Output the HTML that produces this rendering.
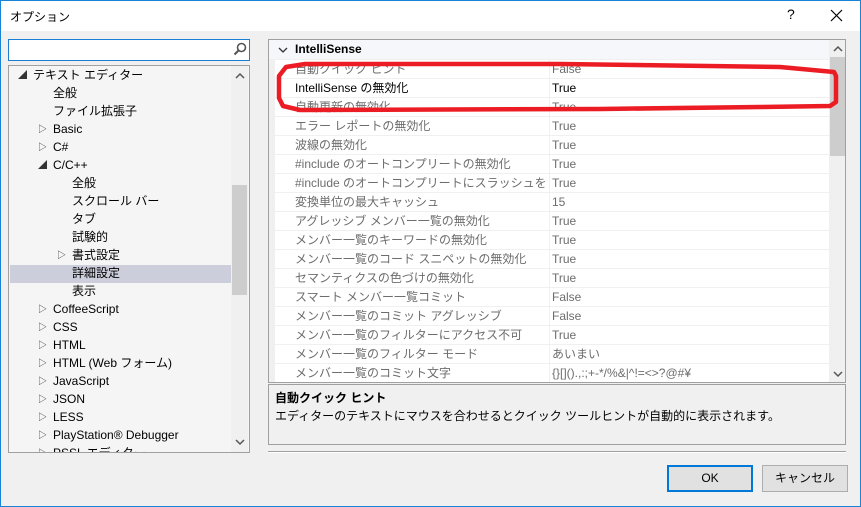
<!DOCTYPE html>
<html><head><meta charset="utf-8"><style>
*{margin:0;padding:0;box-sizing:border-box}
body{width:861px;height:507px;overflow:hidden;background:#f0f0f0;font-family:"Liberation Sans","Noto Sans CJK JP",sans-serif;font-size:12px;color:#000;position:relative}
.a{position:absolute;white-space:nowrap}
#win{position:absolute;left:0;top:0;width:861px;height:507px;border:1px solid #1883d7}
#title{position:absolute;left:1px;top:1px;width:859px;height:30px;background:#fff}
.t{position:absolute;line-height:18px;height:18px}
.tri{position:absolute;font-size:9px;line-height:18px;color:#333}
.r{position:absolute;left:0;width:560px;height:19px;border-bottom:1px solid #f0f0f0;background:#fff;color:#6d6d6d;line-height:18px}
.r span{position:absolute;left:26px;width:252px;overflow:hidden}
.r b{font-weight:normal;position:absolute;left:283px}
</style></head><body>
<div id="win"></div>
<div id="title"></div>
<div class="a" style="left:10px;top:8px;font-size:12px">オプション</div>
<div class="a" style="left:787px;top:6px;font-size:14px">?</div>
<svg class="a" style="left:830px;top:9px" width="13" height="13"><path d="M1 1L12 12M12 1L1 12" stroke="#000" stroke-width="1.2"/></svg>

<div class="a" style="left:8px;top:39px;width:242px;height:22px;background:#fff;border:1px solid #1a7fd4"></div>
<svg class="a" style="left:233px;top:42px" width="14" height="14"><circle cx="8.5" cy="5.5" r="4" fill="none" stroke="#555" stroke-width="1.6"/><path d="M5.5 8.5L1.5 12.5" stroke="#555" stroke-width="2"/></svg>

<div class="a" style="left:8px;top:65px;width:242px;height:388px;background:#f5f5f5;border:1px solid #a0a0a0;overflow:hidden">
<div class="a" style="left:222px;top:0;width:17px;height:386px;background:#f0f0f0"></div>
<div class="a" style="left:223px;top:119px;width:15px;height:110px;background:#cdcdcd"></div>
<svg class="a" style="left:226px;top:6px" width="10" height="8"><path d="M1 6L5 2L9 6" fill="none" stroke="#555" stroke-width="1.5"/></svg>
<svg class="a" style="left:226px;top:372px" width="10" height="8"><path d="M1 2L5 6L9 2" fill="none" stroke="#555" stroke-width="1.5"/></svg>
<div class="a" style="left:1px;top:199px;width:221px;height:18px;background:#cccedb"></div>
</div>
<div style="position:absolute;left:9px;top:66px;width:222px;height:386px;overflow:hidden">
<div class="tri" style="left:9px;top:0">◢</div><div class="t" style="left:24px;top:0">テキスト エディター</div>
<div class="t" style="left:44px;top:18px">全般</div>
<div class="t" style="left:44px;top:36px">ファイル拡張子</div>
<div class="tri" style="left:29px;top:54px">▷</div><div class="t" style="left:44px;top:54px">Basic</div>
<div class="tri" style="left:29px;top:72px">▷</div><div class="t" style="left:44px;top:72px">C#</div>
<div class="tri" style="left:29px;top:90px">◢</div><div class="t" style="left:44px;top:90px">C/C++</div>
<div class="t" style="left:63px;top:108px">全般</div>
<div class="t" style="left:63px;top:126px">スクロール バー</div>
<div class="t" style="left:63px;top:144px">タブ</div>
<div class="t" style="left:63px;top:162px">試験的</div>
<div class="tri" style="left:48px;top:180px">▷</div><div class="t" style="left:63px;top:180px">書式設定</div>
<div class="t" style="left:63px;top:198px">詳細設定</div>
<div class="t" style="left:63px;top:216px">表示</div>
<div class="tri" style="left:29px;top:234px">▷</div><div class="t" style="left:44px;top:234px">CoffeeScript</div>
<div class="tri" style="left:29px;top:252px">▷</div><div class="t" style="left:44px;top:252px">CSS</div>
<div class="tri" style="left:29px;top:270px">▷</div><div class="t" style="left:44px;top:270px">HTML</div>
<div class="tri" style="left:29px;top:288px">▷</div><div class="t" style="left:44px;top:288px">HTML (Web フォーム)</div>
<div class="tri" style="left:29px;top:306px">▷</div><div class="t" style="left:44px;top:306px">JavaScript</div>
<div class="tri" style="left:29px;top:324px">▷</div><div class="t" style="left:44px;top:324px">JSON</div>
<div class="tri" style="left:29px;top:342px">▷</div><div class="t" style="left:44px;top:342px">LESS</div>
<div class="tri" style="left:29px;top:360px">▷</div><div class="t" style="left:44px;top:360px">PlayStation® Debugger</div>
<div class="tri" style="left:29px;top:378px">▷</div><div class="t" style="left:44px;top:378px">PSSL エディター</div>
</div>

<div class="a" style="left:268px;top:39px;width:578px;height:344px;border:1px solid #a0a0a0;background:#f0f0f0;overflow:hidden">
<div class="a" style="left:0;top:0;width:560px;height:19px;background:#f5f7fa"></div>
<div class="a" style="left:560px;top:0;width:16px;height:342px;background:#f0f0f0"></div>
<div class="a" style="left:561px;top:17px;width:15px;height:99px;background:#cdcdcd"></div>
<svg class="a" style="left:564px;top:5px" width="10" height="8"><path d="M1 6L5 2L9 6" fill="none" stroke="#555" stroke-width="1.5"/></svg>
<svg class="a" style="left:564px;top:330px" width="10" height="8"><path d="M1 2L5 6L9 2" fill="none" stroke="#555" stroke-width="1.5"/></svg>
<svg class="a" style="left:9px;top:6px" width="10" height="8"><path d="M1 2L5 6L9 2" fill="none" stroke="#333" stroke-width="1.3"/></svg>
<div class="a" style="left:26px;top:2px;font-weight:bold">IntelliSense</div>
</div>
<div style="position:absolute;left:269px;top:59px;width:560px;height:323px;overflow:hidden">
<div style="position:relative;left:0;top:-59px">
<div class="r" style="top:60px"><span>自動クイック ヒント</span><b>False</b></div>
<div class="r" style="top:79px;color:#000"><span>IntelliSense の無効化</span><b>True</b></div>
<div class="r" style="top:98px"><span>自動更新の無効化</span><b>True</b></div>
<div class="r" style="top:117px"><span>エラー レポートの無効化</span><b>True</b></div>
<div class="r" style="top:136px"><span>波線の無効化</span><b>True</b></div>
<div class="r" style="top:155px"><span>#include のオートコンプリートの無効化</span><b>True</b></div>
<div class="r" style="top:174px"><span>#include のオートコンプリートにスラッシュを使用</span><b>True</b></div>
<div class="r" style="top:193px"><span>変換単位の最大キャッシュ</span><b>15</b></div>
<div class="r" style="top:212px"><span>アグレッシブ メンバー一覧の無効化</span><b>True</b></div>
<div class="r" style="top:231px"><span>メンバー一覧のキーワードの無効化</span><b>True</b></div>
<div class="r" style="top:250px"><span>メンバー一覧のコード スニペットの無効化</span><b>True</b></div>
<div class="r" style="top:269px"><span>セマンティクスの色づけの無効化</span><b>True</b></div>
<div class="r" style="top:288px"><span>スマート メンバー一覧コミット</span><b>False</b></div>
<div class="r" style="top:307px"><span>メンバー一覧のコミット アグレッシブ</span><b>False</b></div>
<div class="r" style="top:326px"><span>メンバー一覧のフィルターにアクセス不可</span><b>True</b></div>
<div class="r" style="top:345px"><span>メンバー一覧のフィルター モード</span><b>あいまい</b></div>
<div class="r" style="top:364px"><span>メンバー一覧のコミット文字</span><b>{}[]().,:;+-*/%&amp;|^!=&lt;&gt;?@#¥</b></div>
</div>
<div class="a" style="left:0;top:0;width:6px;height:323px;background:#f0f0f0"></div>
<div class="a" style="left:280px;top:0;width:1px;height:323px;background:#f0f0f0"></div>
</div>

<svg class="a" style="left:0;top:0" width="861" height="507">
<path d="M305 64 L560 64 L780 67 L834 72 L836 76 L836 102 L830 106 L760 107 L600 109 L300 110 L283 106 L279 98 L279 76 L286 67 Z" fill="none" stroke="#ec1c24" stroke-width="4.5" stroke-linejoin="round"/>
</svg>

<div class="a" style="left:268px;top:384px;width:578px;height:61px;border:1px solid #a0a0a0;background:#f0f0f0"></div>
<div class="a" style="left:275px;top:389px;font-weight:bold">自動クイック ヒント</div>
<div class="a" style="left:275px;top:407px">エディターのテキストにマウスを合わせるとクイック ツールヒントが自動的に表示されます。</div>
<div class="a" style="left:268px;top:451px;width:578px;height:2px;border-top:1px solid #a0a0a0;border-bottom:1px solid #fff"></div>

<div class="a" style="left:667px;top:465px;width:86px;height:27px;background:#e1e1e1;border:2px solid #0078d7;text-align:center;line-height:23px">OK</div>
<div class="a" style="left:762px;top:465px;width:86px;height:27px;background:#e1e1e1;border:1px solid #adadad;text-align:center;line-height:25px">キャンセル</div>
</body></html>
